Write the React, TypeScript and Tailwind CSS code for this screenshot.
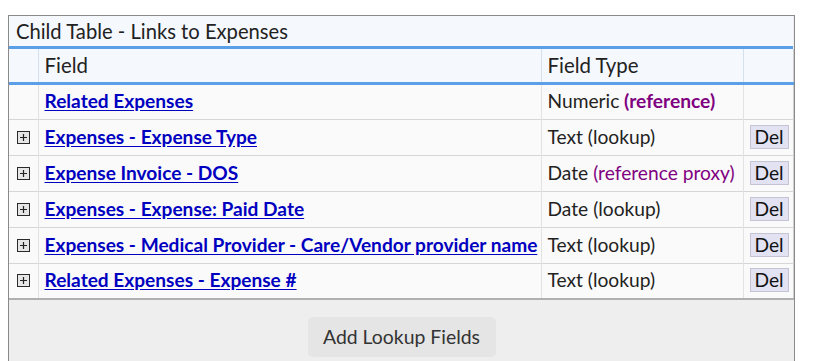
import React from 'react'

type Row = {
  field: string
  base: string
  extra?: string
  extraBold?: boolean
  expandable: boolean
  deletable: boolean
}

const rows: Row[] = [
  { field: 'Related Expenses', base: 'Numeric', extra: '(reference)', extraBold: true, expandable: false, deletable: false },
  { field: 'Expenses - Expense Type', base: 'Text (lookup)', expandable: true, deletable: true },
  { field: 'Expense Invoice - DOS', base: 'Date', extra: '(reference proxy)', expandable: true, deletable: true },
  { field: 'Expenses - Expense: Paid Date', base: 'Date (lookup)', expandable: true, deletable: true },
  { field: 'Expenses - Medical Provider - Care/Vendor provider name', base: 'Text (lookup)', expandable: true, deletable: true },
  { field: 'Related Expenses - Expense #', base: 'Text (lookup)', expandable: true, deletable: true },
]

function PlusBox() {
  return (
    <svg width="13" height="13" viewBox="0 0 13 13" className="block mx-auto">
      <rect x="0.5" y="0.5" width="12" height="12" fill="#e6e6e6" stroke="#2a2a2a" />
      <path d="M3 6.5h7M6.5 3v7" stroke="#222" strokeWidth="1.2" />
    </svg>
  )
}

export default function App() {
  return (
    <div className="min-h-[361px] bg-white pl-2 pt-[15px] font-['Lato','Noto_Sans',sans-serif] text-[19.2px] text-[#222]">
      <div className="w-[787px] border-x border-t border-[#8a8a8a] bg-[#eeeeee] pb-[10px]">
        <div className="bg-[#f5f8fd] mr-px">
          <div className="h-[30px] px-[7px] text-[20.2px] leading-[30px]">Child Table - Links to Expenses</div>
          <div className="h-[3px] bg-[#5a9fe7]" />
        </div>
        <table className="w-[784px] border-collapse table-fixed border-r border-[#cfcfcf] border-b-2 border-b-[#b0b0b0]">
          <colgroup>
            <col className="w-[29px]" />
            <col className="w-[503px]" />
            <col className="w-[202px]" />
            <col className="w-[50px]" />
          </colgroup>
          <thead>
            <tr className="h-[34px] bg-[#f5f8fd] border-b-[3px] border-b-[#5a9fe7] text-[20.4px]">
              <th className="border-r border-[#d4e0ec]" />
              <th className="border-r border-[#d4e0ec] px-[6px] text-left font-normal">Field</th>
              <th className="border-r border-[#d4e0ec] px-[6px] text-left font-normal">Field Type</th>
              <th />
            </tr>
          </thead>
          <tbody>
            {rows.map((r) => (
              <tr key={r.field} className="h-[36px] bg-[#fafafa] border-b border-[#d6d6d6]">
                <td className="border-r border-[#e2e2e2] align-middle">{r.expandable && <PlusBox />}</td>
                <td className="border-r border-[#e2e2e2] px-[6px] whitespace-nowrap">
                  <a href="#" className="font-bold text-[19.1px] text-[#0000c0] underline underline-offset-2">
                    {r.field}
                  </a>
                </td>
                <td className="border-r border-[#e2e2e2] px-[6px] whitespace-nowrap">
                  {r.base}
                  {r.extra && (
                    <span className={r.extraBold ? 'font-bold text-[#800080]' : 'text-[#800080]'}> {r.extra}</span>
                  )}
                </td>
                <td className="pl-[6px]">
                  {r.deletable && (
                    <button className="h-[24px] px-[4px] leading-[22px] bg-[#e2e2f2] border border-[#c4c4d4] text-[#111]">
                      Del
                    </button>
                  )}
                </td>
              </tr>
            ))}
          </tbody>
        </table>
        <div className="flex justify-center pt-[17px]">
          <button className="h-[40px] w-[188px] rounded-[5px] bg-[#e5e5e5] text-[19.4px] text-[#333]">Add Lookup Fields</button>
        </div>
      </div>
    </div>
  )
}
